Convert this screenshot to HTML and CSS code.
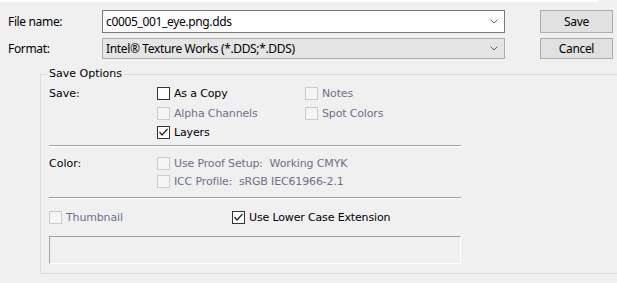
FILE: index.html
```html
<!DOCTYPE html>
<html lang="en">
<head>
    <meta charset="UTF-8">
    <title>Save As</title>
    <link rel="stylesheet" href="styles.css">
</head>
<body>
    <div class="topline"></div>

    <!-- File name / format -->
    <div class="header">
        <div class="row">
            <label class="field-label">File name:</label>
            <div class="combo edit">
                <span>c0005_001_eye.png.dds</span>
                <svg class="chev" width="8" height="5" viewBox="0 0 8 5"><polyline points="0.5,0.5 4,4 7.5,0.5" /></svg>
            </div>
            <button class="btn">Save</button>
        </div>
        <div class="row row-format">
            <label class="field-label">Format:</label>
            <div class="combo drop">
                <span>Intel® Texture Works (*.DDS;*.DDS)</span>
                <svg class="chev" width="8" height="5" viewBox="0 0 8 5"><polyline points="0.5,0.5 4,4 7.5,0.5" /></svg>
            </div>
            <button class="btn">Cancel</button>
        </div>
    </div>

    <!-- Save Options group -->
    <fieldset class="options">
        <legend>Save Options</legend>

        <div class="section save-section">
            <div class="section-label">Save:</div>
            <div class="check">
                <span class="cb"></span><span>As a Copy</span>
            </div>
            <div class="check off">
                <span class="cb"></span><span>Notes</span>
            </div>
            <div class="check off col2">
                <span class="cb"></span><span>Alpha Channels</span>
            </div>
            <div class="check off">
                <span class="cb"></span><span>Spot Colors</span>
            </div>
            <div class="check col2">
                <span class="cb"><svg width="11" height="11" viewBox="0 0 11 11"><polyline points="1.5,5 4,8 9.5,2" /></svg></span><span>Layers</span>
            </div>
        </div>

        <div class="sep"></div>

        <div class="section color-section">
            <div class="section-label">Color:</div>
            <div class="check off">
                <span class="cb"></span><span>Use Proof Setup:&nbsp; Working CMYK</span>
            </div>
            <div class="check off col2">
                <span class="cb"></span><span>ICC Profile:&nbsp; sRGB IEC61966-2.1</span>
            </div>
        </div>

        <div class="sep"></div>

        <div class="section bottom-section">
            <div class="check off">
                <span class="cb"></span><span>Thumbnail</span>
            </div>
            <div class="check">
                <span class="cb"><svg width="11" height="11" viewBox="0 0 11 11"><polyline points="1.5,5 4,8 9.5,2" /></svg></span><span>Use Lower Case Extension</span>
            </div>
        </div>

        <div class="message"></div>
    </fieldset>
</body>
</html>
```

FILE: styles.css
```css
body {
    margin: 0;
    background: #f0f0f0;
    color: #000;
    font-family: 'DejaVu Sans', sans-serif;
    font-size: 11px;
    width: 617px;
    height: 283px;
    overflow: hidden;
}
.topline {
    width: 598px;
    height: 2px;
    background: #fff;
}
.header {
    padding: 8px 0 0 8px;
    font-family: 'Noto Sans', sans-serif;
    font-size: 12px;
    letter-spacing: -0.35px;
}
.row {
    display: flex;
    align-items: center;
    height: 23px;
}
.row-format {
    margin-top: 5px;
    height: 21px;
}
.field-label {
    width: 94px;
}
.combo {
    box-sizing: border-box;
    width: 403px;
    height: 100%;
    display: flex;
    align-items: center;
    justify-content: space-between;
    padding: 0 6px 0 3px;
}
.combo.edit {
    background: #fff;
    border: 1px solid #7a7a7a;
}
.combo.drop {
    background: #e5e5e5;
    border: 1px solid #adadad;
}
.chev polyline {
    fill: none;
    stroke: #606060;
    stroke-width: 1;
}
.btn {
    box-sizing: border-box;
    margin-left: 35px;
    width: 73px;
    height: 100%;
    background: #e1e1e1;
    border: 1px solid #adadad;
    font-family: inherit;
    font-size: inherit;
    letter-spacing: inherit;
    color: #000;
    padding: 0;
}
.options {
    box-sizing: border-box;
    margin: 8px 0 0 40px;
    width: 580px;
    padding: 2px 8px 9px 8px;
    border: 1px solid #dcdcdc;
    min-width: 0;
}
.options legend {
    padding: 0 2px;
    margin-left: -2px;
    line-height: 14px;
}
.section {
    width: 412px;
    display: grid;
    align-items: center;
}
.save-section {
    grid-template-columns: 108px 148px 1fr;
    grid-template-rows: 19px 20px 19px;
    margin-top: 1px;
}
.color-section {
    grid-template-columns: 108px 1fr;
    grid-auto-rows: 18px;
}
.bottom-section {
    grid-template-columns: 183px 1fr;
    grid-auto-rows: 18px;
}
.col2 {
    grid-column: 2;
}
.section-label {
    align-self: start;
    line-height: 19px;
}
.check {
    display: flex;
    align-items: center;
    gap: 4px;
    white-space: nowrap;
    letter-spacing: -0.15px;
}
.check.off {
    color: #6f6f8a;
}
.cb {
    box-sizing: border-box;
    width: 13px;
    height: 13px;
    border: 1px solid #333;
    background: #fff;
    display: inline-flex;
    flex: none;
}
.check.off .cb {
    border-color: #cccccc;
    background: #f5f5f5;
}
.cb polyline {
    fill: none;
    stroke: #222;
    stroke-width: 1.2;
}
.sep {
    width: 412px;
    border-top: 1px solid #a0a0a0;
    border-bottom: 1px solid #fff;
    margin: 3px 0 7px;
}
.color-section + .sep {
    margin: 7px 0 9px;
}
.message {
    box-sizing: border-box;
    width: 412px;
    height: 28px;
    margin-top: 10px;
    border-top: 1px solid #a0a0a0;
    border-left: 1px solid #a0a0a0;
    border-right: 1px solid #fff;
    border-bottom: 1px solid #fff;
}
```
